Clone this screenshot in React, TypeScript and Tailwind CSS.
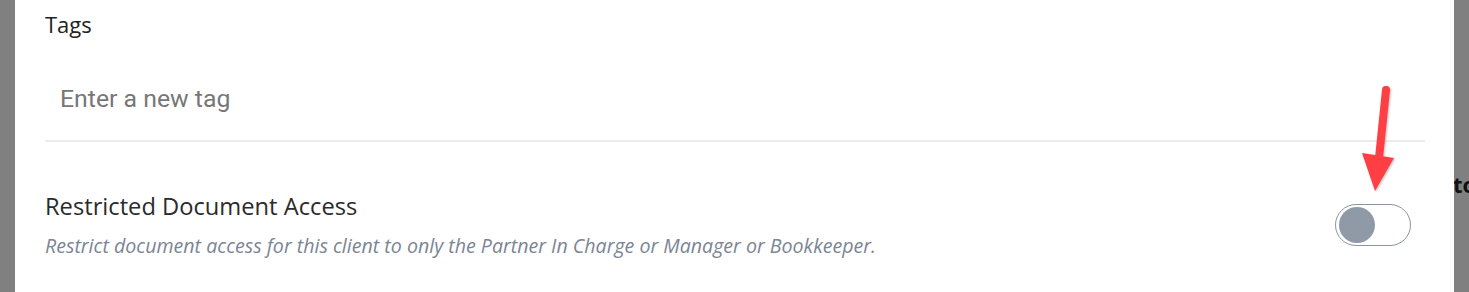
import { useState } from "react";

function RedArrow() {
    return (
        <svg
            className="pointer-events-none absolute left-[1340px] top-[78px] drop-shadow-[1px_1px_1px_rgba(0,0,0,0.25)]"
            width="70"
            height="120"
            viewBox="1340 78 70 120"
        >
            <line x1="1386" y1="90" x2="1379" y2="158" stroke="#ff3f44" strokeWidth="8" strokeLinecap="round" />
            <polygon points="1362,153 1394,158 1375,191" fill="#ff3f44" />
        </svg>
    );
}

function Toggle() {
    const [on, setOn] = useState(false);
    return (
        <button
            type="button"
            onClick={() => setOn(!on)}
            className="flex h-[42px] w-[76px] shrink-0 items-center rounded-full border border-[#8a95a3] bg-white px-[3px]"
        >
            <span
                className={
                    on
                        ? "ml-auto h-[36px] w-[36px] rounded-full bg-[#8f9aa6]"
                        : "h-[36px] w-[36px] rounded-full bg-[#8f9aa6]"
                }
            />
        </button>
    );
}

export default function App() {
    return (
        <div className="relative flex h-[292px] w-[1469px] overflow-hidden bg-[#808080] font-['Open_Sans',sans-serif]">
            <div className="w-[15px] shrink-0 bg-[#808080]" />
            <div className="flex w-[1439px] shrink-0 flex-col bg-white pl-[30px] pr-[29px]">
                <div className="pt-[10px] text-[22px] leading-[28px] text-[#222]">Tags</div>
                <input
                    type="text"
                    placeholder="Enter a new tag"
                    className="mt-[47px] h-[28px] bg-transparent pl-[15px] font-['Roboto',sans-serif] text-[24.8px] leading-[28px] text-[#333] outline-none placeholder:text-[#777]"
                />
                <div className="mt-[27px] h-[2px] bg-[#ececec]" />
                <div className="mt-[49px] flex items-center justify-between pr-[14px]">
                    <div className="flex flex-col">
                        <span className="text-[23.7px] leading-[30px] text-[#2b2b2b]">Restricted Document Access</span>
                        <span className="mt-[13px] text-[19.6px] italic leading-[24px] text-[#7b8594]">
                            Restrict document access for this client to only the Partner In Charge or Manager or
                            Bookkeeper.
                        </span>
                    </div>
                    <Toggle />
                </div>
            </div>
            <div className="w-[15px] shrink-0 overflow-hidden bg-[#808080]">
                <span className="-ml-[1px] mt-[170px] block whitespace-nowrap text-[22px] font-bold leading-[28px] text-[#111]">
                    to
                </span>
            </div>
            <RedArrow />
        </div>
    );
}
